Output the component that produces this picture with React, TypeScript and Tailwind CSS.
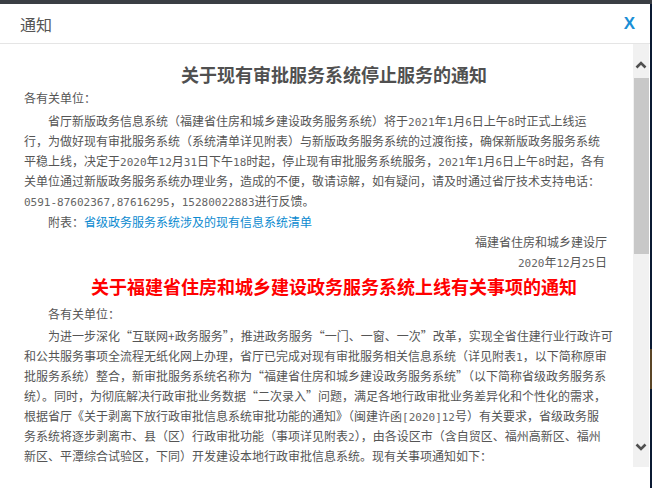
import React from "react";

const splitDigits = (s: string) => {
  const parts = s.split(/(\[?\d[\d\-,\]]*)/g);
  return parts.map((p, i) =>
    i % 2 === 1 ? (
      <span key={i} className="font-['DejaVu_Sans_Mono',monospace] text-[11px] text-[#666]">
        {p}
      </span>
    ) : (
      <React.Fragment key={i}>{p}</React.Fragment>
    )
  );
};

const Line = ({ text, indent }: { text: string; indent?: boolean }) => (
  <div className={`h-[20px] leading-[20px] whitespace-nowrap ${indent ? "pl-[24px]" : ""}`}>
    {splitDigits(text)}
  </div>
);

const para1 = [
  "省厅新版政务信息系统（福建省住房和城乡建设政务服务系统）将于2021年1月6日上午8时正式上线运",
  "行，为做好现有审批服务系统（系统清单详见附表）与新版政务服务系统的过渡衔接，确保新版政务服务系统",
  "平稳上线，决定于2020年12月31日下午18时起，停止现有审批服务系统服务，2021年1月6日上午8时起，各有",
  "关单位通过新版政务服务系统办理业务，造成的不便，敬请谅解，如有疑问，请及时通过省厅技术支持电话：",
  "0591-87602367,87616295，15280022883进行反馈。",
];

const para2 = [
  "为进一步深化“互联网+政务服务”，推进政务服务“一门、一窗、一次”改革，实现全省住建行业行政许可",
  "和公共服务事项全流程无纸化网上办理，省厅已完成对现有审批服务相关信息系统（详见附表1，以下简称原审",
  "批服务系统）整合，新审批服务系统名称为“福建省住房和城乡建设政务服务系统”（以下简称省级政务服务系",
  "统）。同时，为彻底解决行政审批业务数据“二次录入”问题，满足各地行政审批业务差异化和个性化的需求，",
  "根据省厅《关于剥离下放行政审批信息系统审批功能的通知》（闽建许函[2020]12号）有关要求，省级政务服",
  "务系统将逐步剥离市、县（区）行政审批功能（事项详见附表2），由各设区市（含自贸区、福州高新区、福州",
  "新区、平潭综合试验区，下同）开发建设本地行政审批信息系统。现有关事项通知如下：",
];

const Chevron = ({ up }: { up?: boolean }) => (
  <svg width="12" height="8" viewBox="0 0 12 8">
    <polyline
      points={up ? "1.5,6.5 6,2 10.5,6.5" : "1.5,1.5 6,6 10.5,1.5"}
      fill="none"
      stroke="#505050"
      strokeWidth="2.6"
    />
  </svg>
);

export default function App() {
  return (
    <div
      lang="zh-CN"
      className="w-[652px] h-[488px] overflow-hidden flex flex-col bg-white font-['Noto_Sans_CJK_SC',sans-serif]"
    >
      <div className="h-[4px] shrink-0 bg-[#3a3e44]" />
      <div className="flex flex-1 min-h-0">
        <div className="w-[650px] bg-white flex flex-col">
          <div className="h-[40px] shrink-0 border-b border-[#e5e5e5] flex items-center justify-between pl-[20px] pr-[15px]">
            <span className="text-[16px] text-[#555]">通知</span>
            <span className="font-['Liberation_Sans',sans-serif] font-bold text-[17px] text-[#1a8fd6]">X</span>
          </div>
          <div className="flex h-[424px] shrink-0">
            <div className="w-[633px] overflow-hidden pl-[24px] pr-[26px] pt-[17px] text-[12px] text-[#555]">
              <div className="pl-[37px] text-center text-[18px] leading-[26px] font-bold text-[#505050] whitespace-nowrap">
                关于现有审批服务系统停止服务的通知
              </div>
              <div className="mt-[1px]">
                <Line text="各有关单位：" />
              </div>
              <div className="mt-[3px]">
                {para1.map((t, i) => (
                  <Line key={i} text={t} indent={i === 0} />
                ))}
              </div>
              <div className="mt-[1px] h-[20px] leading-[20px] pl-[24px] whitespace-nowrap">
                附表：<span className="text-[#0b8ad0]">省级政务服务系统涉及的现有信息系统清单</span>
              </div>
              <div className="text-right">
                <div className="h-[20px] leading-[20px]">福建省住房和城乡建设厅</div>
                <div className="h-[20px] leading-[20px]">{splitDigits("2020年12月25日")}</div>
              </div>
              <div className="pl-[37px] text-center text-[18px] leading-[28px] font-bold text-[#ff0000] whitespace-nowrap">
                关于福建省住房和城乡建设政务服务系统上线有关事项的通知
              </div>
              <div className="mt-[4px]">
                <Line text="各有关单位：" indent />
              </div>
              <div className="mt-[2px]">
                {para2.map((t, i) => (
                  <Line key={i} text={t} indent={i === 0} />
                ))}
              </div>
            </div>
            <div className="w-[16px] h-[423px] bg-[#f1f1f1] flex flex-col">
              <div className="h-[34px] pt-[8px] flex items-center justify-center">
                <Chevron up />
              </div>
              <div className="h-[176px] ml-[1px] bg-[#c8c8c8]" />
              <div className="flex-1" />
              <div className="h-[40px] flex items-center justify-center">
                <Chevron />
              </div>
            </div>
            <div className="w-[1px]" />
          </div>
        </div>
        <div className="w-[2px] flex flex-col bg-[#0b1a33]">
          <div className="h-[345px]" />
          <div className="h-[40px] bg-[#5a4526]" />
        </div>
      </div>
    </div>
  );
}
